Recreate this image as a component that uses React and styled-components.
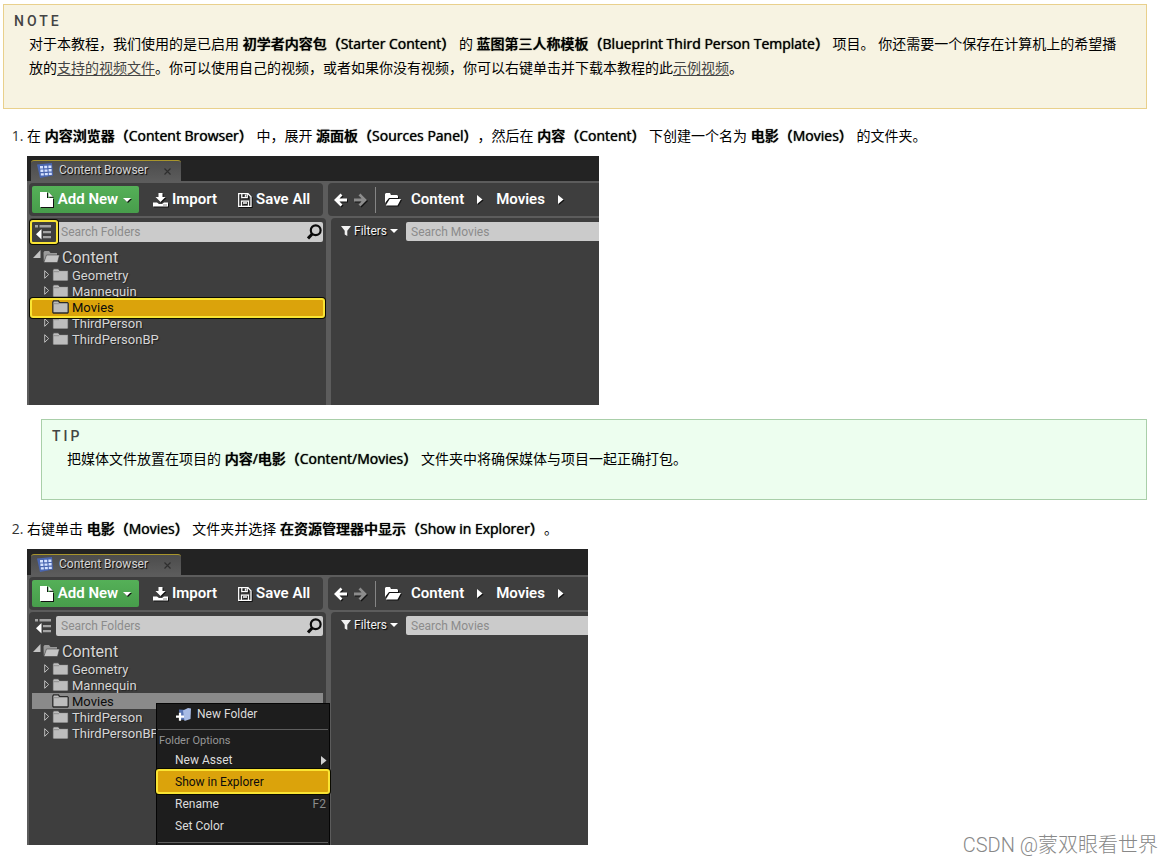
import styled, { createGlobalStyle, css } from "styled-components";

const GlobalStyle = createGlobalStyle`
  * {
    box-sizing: border-box;
  }
  body {
    margin: 0;
    background: #fff;
    color: #000;
    font-family: "Open Sans", "Noto Sans CJK SC", sans-serif;
    font-size: 14px;
    line-height: 24px;
    text-spacing-trim: space-all;
  }
  button, input {
    font: inherit;
    color: inherit;
    border: 0;
    padding: 0;
    margin: 0;
    background: none;
  }
  svg {
    display: block;
    flex: none;
  }
`;

const folders = [
  { name: "Geometry", expandable: true },
  { name: "Mannequin", expandable: true },
  { name: "Movies", expandable: false },
  { name: "ThirdPerson", expandable: true },
  { name: "ThirdPersonBP", expandable: true }
];

const TabIcon = () => (
  <svg width="17" height="16" viewBox="0 0 17 16">
    <path d="M0 1.500 15 0 16 12.500 3 15z" fill="#4a66b0" />
    <path
      d="M3 3h3v2.400H3zM7.200 2.800h3v2.400h-3zM11.400 2.500h3v2.500h-3zM3.400 6.600h3V9h-3zM7.500 6.400h3v2.400h-3zM11.600 6.100h3v2.500h-3zM3.800 10.200h3v2.200h-3zM7.800 10h3v2.200h-3zM11.800 9.700h3V12h-3z"
      fill="#d6e2ff"
    />
  </svg>
);

const FileIcon = () => (
  <svg width="13" height="15" viewBox="0 0 13 15" fill="#fff">
    <path d="M0 0h7v6h6v9H0z" />
    <path d="M8.500 0L13 4.800H8.500z" />
  </svg>
);

const ImportIcon = () => (
  <svg width="15" height="14" viewBox="0 0 15 14" fill="#fff">
    <path d="M5.500 0h4v4h3L7.500 9 2.500 4h3z" />
    <path d="M0 9.500h4l2 1.500h3l2-1.500h4v4H0zM10.500 11.500v1h1v-1zM12.500 11.500v1h1v-1z" fillRule="evenodd" />
  </svg>
);

const SaveIcon = () => (
  <svg width="14" height="14" viewBox="0 0 14 14" fill="none" stroke="#fff" strokeWidth="1.300">
    <path d="M.7.7h9.300l3 3v9.600H.7z" />
    <path d="M3.800 1v3.700h5.400V1M3.500 13V8.200h7V13M5 10h4" />
    <path d="M7.500 1.500v2.300" />
  </svg>
);

const ArrowIcon = ({ flip }) => (
  <svg width="14" height="14" viewBox="0 0 14 14" fill="none" stroke={flip ? "#8c8c8c" : "#fff"} strokeWidth="2.800">
    <path d={flip ? "M1 7h11M6.500 1.500 12 7l-5.500 5.500" : "M13 7H2M7.500 1.500 2 7l5.500 5.500"} />
  </svg>
);

const OpenFolderIcon = () => (
  <svg width="16" height="13" viewBox="0 0 16 13" fill="#fff">
    <path d="M0 1l1-1h4l1 2h6l1 1v2H4L0 10z" />
    <path d="M4.700 6H16l-3.500 6.500H.8z" />
  </svg>
);

const FolderIcon = ({ open, selected }) => (
  <svg width="17" height="14" viewBox="0 0 17 14">
    {open ? (
      <>
        <path d="M.5 2.500 1.500 1H6l1.500 2H14v3H4L.8 12z" fill="#9a9a9a" />
        <path d="M3.500 5H16.500L14.500 12.500H.8z" fill="#c4c4c4" stroke="#333" strokeWidth=".5" />
      </>
    ) : (
      <>
        <path
          d="M.8 2 1.600.8h4.800L7.600 2.600h7.800l.8.8v8.800l-.6.8H1.400l-.6-.8z"
          fill="#bdbdbd"
          stroke={selected ? "#2b2b2b" : "#3a3a3a"}
          strokeWidth={selected ? 1.3 : 0.8}
        />
        <path d="M1.500 3.700h5.600" stroke="#8e8e8e" />
      </>
    )}
  </svg>
);

const SourcesIcon = () => (
  <svg width="16" height="16" viewBox="0 0 16 16">
    <path d="M0 1h3v2.500H0zM4.500 1H16v2.500H4.500zM8 7h8v2.300H8zM8 12h8v2.300H8z" fill="#a3a3a3" />
    <path d="M6.500 5v10.500L1 10.200z" fill="#fff" />
  </svg>
);

const SearchIcon = () => (
  <svg width="15" height="16" viewBox="0 0 15 16" fill="none" stroke="#0b0b0b">
    <circle cx="8.700" cy="6.300" r="4.900" strokeWidth="2.200" />
    <path d="M5.200 10 1 14.500" strokeWidth="3" />
  </svg>
);

const FilterIcon = () => (
  <svg width="10" height="10" viewBox="0 0 10 10" fill="#f2f2f2">
    <path d="M0 0h10L6.300 4.800V10L3.700 8.500V4.800z" />
  </svg>
);

const CaretIcon = () => (
  <svg width="8" height="4" viewBox="0 0 8 4" fill="#fff">
    <path d="M0 0h8L4 4z" />
  </svg>
);

const RightIcon = ({ color = "#fff" }) => (
  <svg width="6" height="9" viewBox="0 0 6 9" fill={color}>
    <path d="M0 0l5.500 4.500L0 9z" />
  </svg>
);

const ExpandIcon = () => (
  <svg width="8" height="11" viewBox="0 0 8 11" fill="none" stroke="#bdbdbd">
    <path d="M1.700.7l4 3.800-4 3.800z" />
  </svg>
);

const ExpandedIcon = () => (
  <svg width="9" height="14" viewBox="0 0 9 14" fill="#c4c4c4">
    <path d="M8.500 0v8H1z" />
  </svg>
);

const NewFolderIcon = () => (
  <svg width="17" height="15" viewBox="0 0 17 15">
    <path d="M4 2.500 11 3v10l-6-.5z" fill="#5975b5" />
    <path d="M8 3.500 13 1l3 .5-.5 10.500-6 2z" fill="#a9bce6" />
    <path d="M1 9.700h8M5 5.700v8" stroke="#fff" strokeWidth="2.200" />
  </svg>
);

const ContentBrowser = ({ width, height, stripHeight, highlighted, children }) => (
  <StWindow $width={width} $height={height}>
    <StTabStrip $height={stripHeight}>
      <StTab>
        <TabIcon />
        <span>Content Browser</span>
        <button aria-label="Close tab">
          <svg width="7" height="7" viewBox="0 0 7 7" stroke="#2e2e2e" strokeWidth="1.200">
            <path d="M.5.5l6 6M6.500.5l-6 6" />
          </svg>
        </button>
      </StTab>
    </StTabStrip>
    <StRow>
      <StToolbar $main>
        <StAddButton>
          <FileIcon />
          <span>Add New</span>
          <CaretIcon />
        </StAddButton>
        <StToolButton>
          <ImportIcon />
          <span>Import</span>
        </StToolButton>
        <StToolButton $wide>
          <SaveIcon />
          <span>Save All</span>
        </StToolButton>
      </StToolbar>
      <StToolbar>
        <StHistory>
          <button aria-label="Back">
            <ArrowIcon />
          </button>
          <button aria-label="Forward">
            <ArrowIcon flip />
          </button>
        </StHistory>
        <StPath aria-label="Path">
          <OpenFolderIcon />
          <button>
            <span>Content</span>
          </button>
          <RightIcon />
          <button>
            <span>Movies</span>
          </button>
          <RightIcon />
        </StPath>
      </StToolbar>
    </StRow>
    <StRow $fill>
      <StSources>
        <StSearchRow>
          <StSourcesButton aria-label="Toggle sources panel" $highlighted={highlighted}>
            <SourcesIcon />
          </StSourcesButton>
          <StSearch>
            <input type="text" placeholder="Search Folders" aria-label="Search Folders" />
            <SearchIcon />
          </StSearch>
        </StSearchRow>
        <StTree>
          <StRoot>
            <ExpandedIcon />
            <FolderIcon open />
            <span>Content</span>
          </StRoot>
          {folders.map(({ name, expandable }) => {
            const selected = name === "Movies";
            return (
              <StFolder key={name} $selected={selected} $highlighted={selected && highlighted}>
                <StExpander>{expandable && <ExpandIcon />}</StExpander>
                <FolderIcon selected={selected} />
                <span>{name}</span>
              </StFolder>
            );
          })}
        </StTree>
      </StSources>
      <StAssets>
        <StFilterButton>
          <FilterIcon />
          Filters
          <CaretIcon />
        </StFilterButton>
        <StSearch $cut>
          <input type="text" placeholder="Search Movies" aria-label="Search Movies" />
        </StSearch>
      </StAssets>
    </StRow>
    {children}
  </StWindow>
);

const FolderMenu = () => (
  <StMenu>
    <StMenuItem $short>
      <NewFolderIcon />
      New Folder
    </StMenuItem>
    <StMenuLine />
    <StMenuLabel>Folder Options</StMenuLabel>
    <StMenuItem>
      <span>New Asset</span>
      <RightIcon color="#d0d0d0" />
    </StMenuItem>
    <StMenuItem $highlighted>
      <span>Show in Explorer</span>
    </StMenuItem>
    <StMenuItem>
      <span>Rename</span>
      <kbd>F2</kbd>
    </StMenuItem>
    <StMenuItem>
      <span>Set Color</span>
    </StMenuItem>
    <StMenuLine />
  </StMenu>
);

const App = () => {
  return (
    <StPage>
      <GlobalStyle />
      <StNotice>
        <h4>NOTE</h4>
        <p>
          对于本教程，我们使用的是已启用 <strong>初学者内容包（Starter Content）</strong> 的{" "}
          <strong>蓝图第三人称模板（Blueprint Third Person Template）</strong> 项目。
          你还需要一个保存在计算机上的希望播放的<a href="#formats">支持的视频文件</a>
          。你可以使用自己的视频，或者如果你没有视频，你可以右键单击并下载本教程的此
          <a href="#sample">示例视频</a>。
        </p>
      </StNotice>
      <StSteps>
        <li>
          <p>
            在 <strong>内容浏览器（Content Browser）</strong> 中，展开 <strong>源面板（Sources Panel）</strong>
            ，然后在 <strong>内容（Content）</strong> 下创建一个名为 <strong>电影（Movies）</strong> 的文件夹。
          </p>
          <ContentBrowser width={572} height={249} stripHeight={25} highlighted />
          <StNotice $tip>
            <h4>TIP</h4>
            <p>
              把媒体文件放置在项目的 <strong>内容/电影（Content/Movies）</strong> 文件夹中将确保媒体与项目一起正确打包。
            </p>
          </StNotice>
        </li>
        <li>
          <p>
            右键单击 <strong>电影（Movies）</strong> 文件夹并选择{" "}
            <strong>在资源管理器中显示（Show in Explorer）</strong>。
          </p>
          <ContentBrowser width={561} height={296} stripHeight={26}>
            <FolderMenu />
          </ContentBrowser>
        </li>
      </StSteps>
      <StWatermark>CSDN @蒙双眼看世界</StWatermark>
    </StPage>
  );
};

const highlightBox = css`
  border: 2px solid #f9e433;
  border-radius: 3px;
  box-shadow: 0 0 0 1px #0a0a00;
`;

const StPage = styled.main`
  position: relative;
  min-height: 100vh;
  padding: 4px 26px 16px 3px;
  strong {
    font-weight: 500;
    text-shadow: 0 0 1px #000;
  }
`;

const StNotice = styled.section`
  padding: 5px 10px 28px;
  border: 1px solid ${({ $tip }) => ($tip ? "#a9cfa9" : "#e9d08c")};
  background: ${({ $tip }) => ($tip ? "#edfeef" : "#f7f3e2")};
  margin: ${({ $tip }) => ($tip ? "14px 0 17px 14px" : "0 0 15px")};
  h4 {
    margin: 0;
    font-family: Roboto, sans-serif;
    font-size: 14px;
    line-height: 22px;
    font-weight: 500;
    letter-spacing: 3px;
    color: #444;
  }
  p {
    margin: 0;
    padding: 0 15px;
  }
  a {
    color: #444;
    text-underline-offset: 2px;
  }
`;

const StSteps = styled.ol`
  margin: 0;
  padding: 0 0 0 24px;
  li::marker {
    color: #333;
  }
  li > p {
    margin: 0 0 8px;
  }
`;

const StWindow = styled.div`
  position: relative;
  display: flex;
  flex-direction: column;
  gap: 2px;
  width: 100%;
  max-width: ${({ $width }) => $width}px;
  height: ${({ $height }) => $height}px;
  overflow: hidden;
  background: #5c5c5c;
  color: #d6d6d6;
  font-family: Roboto, sans-serif;
  font-size: 13px;
  line-height: 16px;
`;

const StTabStrip = styled.div`
  display: flex;
  align-items: flex-end;
  height: ${({ $height }) => $height}px;
  padding-left: 4px;
  background: #232323;
`;

const StTab = styled.div`
  display: flex;
  align-items: center;
  width: 150px;
  height: 21px;
  padding: 0 10px 0 6px;
  border-top: 1px solid #a8952c;
  border-radius: 3px 3px 0 0;
  background: linear-gradient(#4c4c4c, #5c5c5c);
  font-size: 12px;
  text-shadow: 1px 1px 1px #000;
  span {
    flex: 1;
    padding: 0 0 2px 5px;
  }
`;

const StRow = styled.div`
  display: flex;
  gap: 5px;
  padding-left: 2px;
  flex: ${({ $fill }) => ($fill ? "1" : "none")};
`;

const StToolbar = styled.div`
  display: flex;
  align-items: center;
  height: 33px;
  flex: ${({ $main }) => ($main ? "0 0 294px" : "1")};
  padding-left: ${({ $main }) => ($main ? "3px" : "6px")};
  border-radius: ${({ $main }) => ($main ? "4px" : "4px 0 0 4px")};
  background: #3e3e3e;
  color: #fff;
  font-size: 15px;
  font-weight: 600;
  text-shadow: 1px 1px 1px #000;
  svg {
    filter: drop-shadow(1px 1px 0 #111);
  }
  span {
    display: block;
    padding-bottom: 2px;
  }
`;

const StToolButton = styled.button`
  display: flex;
  align-items: center;
  gap: 4px;
  padding-left: ${({ $wide }) => ($wide ? "21px" : "14px")};
`;

const StAddButton = styled.button`
  display: flex;
  align-items: center;
  justify-content: space-between;
  width: 107px;
  height: 27px;
  padding: 0 8px;
  border-radius: 2px;
  background: linear-gradient(#55b058, #479d4b);
`;

const StHistory = styled.div`
  display: flex;
  align-items: center;
  gap: 5px;
  height: 26px;
  padding-right: 8px;
  border-right: 1px solid #858585;
`;

const StPath = styled.nav`
  display: flex;
  align-items: center;
  gap: 13px;
  padding-left: 9px;
  svg:first-child {
    margin-right: -3px;
  }
`;

const StSources = styled.div`
  flex: 0 0 297px;
  padding: 4px 3px 0;
  border-radius: 4px 4px 0 0;
  background: #3e3e3e;
`;

const StSearchRow = styled.div`
  display: flex;
  height: 20px;
`;

const StSourcesButton = styled.button`
  position: relative;
  display: flex;
  align-items: center;
  width: 24px;
  padding-left: 3px;
  &::after {
    content: "";
    position: absolute;
    inset: -2px;
    ${({ $highlighted }) => $highlighted && highlightBox}
  }
`;

const StSearch = styled.div`
  display: flex;
  align-items: center;
  flex: 1;
  min-width: 0;
  height: ${({ $cut }) => ($cut ? "19px" : "20px")};
  padding: 0 1px 0 5px;
  border-radius: ${({ $cut }) => ($cut ? "2px 0 0 2px" : "2px")};
  background: #cbcbcb;
  input {
    flex: 1;
    min-width: 0;
    height: 100%;
    font-size: 12px;
    color: #222;
    outline: none;
  }
  input::placeholder {
    color: #8b8b8b;
    opacity: 1;
  }
`;

const StTree = styled.ul`
  margin: 0;
  padding: 5px 0 0;
  list-style: none;
  text-shadow: 1px 1px 1px #222;
  span {
    position: relative;
    padding-top: 2px;
  }
`;

const StRoot = styled.li`
  display: flex;
  align-items: center;
  gap: 2px;
  height: 20px;
  font-size: 16px;
`;

const StFolder = styled.li`
  position: relative;
  display: flex;
  align-items: center;
  height: 16px;
  padding-left: 11px;
  span {
    padding-left: 3px;
  }
  svg {
    position: relative;
  }
  ${({ $selected }) =>
    $selected &&
    css`
      z-index: 1;
      background: #8a8a8a;
      color: #0c0c0c;
      text-shadow: none;
    `}
  ${({ $highlighted }) =>
    $highlighted &&
    css`
      &::before {
        content: "";
        position: absolute;
        inset: -1px -2px -3px;
        background: #dba30b;
        ${highlightBox}
      }
    `}
`;

const StExpander = styled.div`
  width: 9px;
`;

const StAssets = styled.div`
  display: flex;
  flex: 1;
  padding: 4px 0 0 10px;
  border-radius: 4px 0 0 0;
  background: #3e3e3e;
`;

const StFilterButton = styled.button`
  display: flex;
  align-items: center;
  gap: 3px;
  width: 65px;
  height: 18px;
  color: #f2f2f2;
  font-size: 12px;
  text-shadow: 1px 1px 1px #000;
`;

const StMenu = styled.div`
  position: absolute;
  top: 154px;
  left: 129px;
  z-index: 2;
  width: 174px;
  padding-bottom: 20px;
  border: 1px solid #050505;
  background: #1d1d1d;
  color: #dcdcdc;
  font-size: 12px;
`;

const StMenuItem = styled.button`
  position: relative;
  display: flex;
  align-items: center;
  gap: 5px;
  width: 100%;
  height: ${({ $short }) => ($short ? "20px" : "22px")};
  padding: 0 2px 0 18px;
  text-align: left;
  span {
    position: relative;
    flex: 1;
  }
  kbd {
    padding-right: 1px;
    font: inherit;
    color: #8b8b8b;
  }
  ${({ $highlighted }) =>
    $highlighted &&
    css`
      color: #0c0c0c;
      &::before {
        content: "";
        position: absolute;
        inset: -2px -1px -1px;
        background: #dba30b;
        ${highlightBox}
      }
    `}
`;

const StMenuLine = styled.div`
  height: 1px;
  margin: 5px 1px 2px;
  background: #5e5e5e;
`;

const StMenuLabel = styled.div`
  padding: 1px 2px 0;
  font-size: 11px;
  color: #969696;
`;

const StWatermark = styled.div`
  position: absolute;
  right: 15px;
  bottom: 4px;
  font-family: Roboto, "Noto Sans CJK SC", sans-serif;
  font-size: 20px;
  font-weight: 300;
  line-height: 30px;
  color: #888;
`;

export default App;
